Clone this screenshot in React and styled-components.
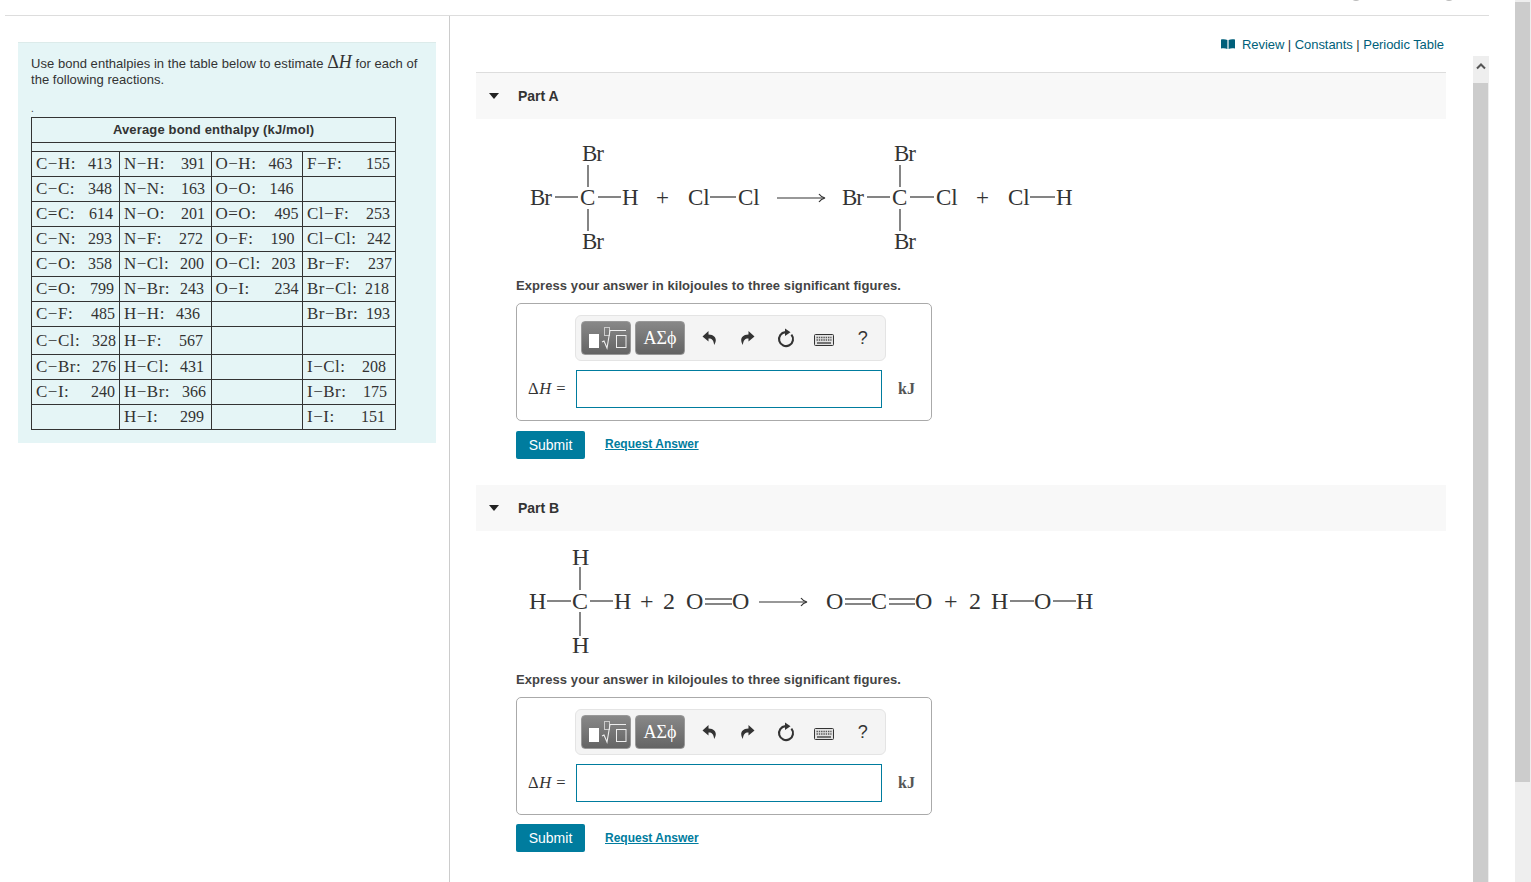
import React from "react";
import styled, { createGlobalStyle } from "styled-components";

const GlobalStyle = createGlobalStyle`
  html, body {
    margin: 0;
    padding: 0;
    background: #fff;
    overflow: hidden;
  }
  body {
    font-family: "Liberation Sans", Arial, sans-serif;
    color: #333;
  }
`;

const Page = styled.div`
  display: flex;
  width: 1531px;
  height: 882px;
  overflow: hidden;
`;

const Main = styled.div`
  width: 1484px;
  margin-left: 5px;
  display: flex;
  flex-direction: column;
`;

const TopStrip = styled.div`
  height: 16px;
  box-sizing: border-box;
  border-bottom: 1px solid #ddd;
  display: flex;
  justify-content: flex-end;
  gap: 81px;
  padding-right: 34px;
  overflow: hidden;
`;

const TopBlob = styled.span`
  width: 12px;
  height: 12px;
  margin-top: -11px;
  border-radius: 50%;
  background: #bbb;
`;

const Columns = styled.div`
  flex: 1;
  display: flex;
  min-height: 0;
`;

const LeftCol = styled.div`
  width: 445px;
  padding: 26px 0 0 13px;
  box-sizing: border-box;
  border-right: 1px solid #ccc;
`;

const InfoPanel = styled.div`
  width: 418px;
  height: 401px;
  box-sizing: border-box;
  background: #e5f5f6;
  border-top: 1px solid #dcebea;
  padding: 13px 13px 0;
  font-size: 13px;
  line-height: 16px;
`;

const InfoText = styled.p`
  margin: 0;
  width: 392px;
  letter-spacing: 0.04px;
`;

const Dot = styled.p`
  margin: 13px 0 0;
  height: 16px;
  line-height: 16px;
  font-size: 10px;
`;

const MathText = styled.span`
  font-family: "Liberation Serif", serif;
  font-size: ${(p) => p.$size || 16}px;
  line-height: 0;
`;

const Table = styled.table`
  border-collapse: collapse;
  table-layout: fixed;
  width: 364px;
  font-family: "Liberation Serif", serif;
  font-size: 16px;
  color: #333;
`;

const HeadCell = styled.th`
  border: 1px solid #333;
  height: 24px;
  padding: 0;
  font-family: "Liberation Sans", Arial, sans-serif;
  font-size: 13px;
  font-weight: 700;
  letter-spacing: 0.15px;
`;

const Spacer = styled.td`
  border: 1px solid #333;
  height: 8px;
  padding: 0;
`;

const Row = styled.tr`
  height: ${(p) => (p.$tall ? 28 : 25)}px;
`;

const Cell = styled.td`
  border: 1px solid #333;
  padding: 0 0 0 4px;
  white-space: nowrap;
  overflow: hidden;
  line-height: 20px;
`;

const BondLabel = styled.span`
  display: inline-block;
  width: ${(p) => p.$w}px;
  font-size: 17px;
  letter-spacing: 0.5px;
`;

const RightCol = styled.div`
  flex: 1;
  display: flex;
  min-width: 0;
`;

const Content = styled.div`
  width: 970px;
  margin-left: 26px;
  margin-right: 27px;
`;

const LinkBar = styled.div`
  height: 56px;
  padding: 21px 2px 0 0;
  box-sizing: border-box;
  display: flex;
  justify-content: flex-end;
  align-items: flex-start;
  font-size: 13px;
  line-height: 16px;
  letter-spacing: -0.05px;
  color: #333;
  white-space: pre;
`;

const BookIcon = styled.svg`
  width: 14px;
  height: 10px;
  margin: 2px 7px 0 0;
  color: #005f7a;
`;

const TopLink = styled.a`
  color: #005f7a;
  text-decoration: none;
  cursor: pointer;
`;

const PartHeader = styled.div`
  height: ${(p) => (p.$ruled ? 47 : 46)}px;
  box-sizing: border-box;
  display: flex;
  align-items: center;
  background: #f8f8f8;
  border-top: ${(p) => (p.$ruled ? "1px solid #ddd" : "none")};
  padding-left: 13px;
  font-size: 14px;
  font-weight: 700;
  color: #333;
`;

const Caret = styled.span`
  width: 0;
  height: 0;
  margin-right: 19px;
  border-left: 5.5px solid transparent;
  border-right: 5.5px solid transparent;
  border-top: 6px solid #222;
`;

const PartBody = styled.div`
  padding-left: 40px;
  margin-bottom: 26px;
`;

const Formula = styled.svg`
  display: block;
  margin-top: 14px;
  width: 600px;
  height: ${(p) => p.$h}px;
  text {
    font-family: "Liberation Serif", serif;
    font-size: ${(p) => p.$font}px;
    fill: #333;
  }
  line {
    stroke: #333;
    stroke-width: 1.2;
  }
  path {
    fill: none;
    stroke: #333;
    stroke-width: 1.2;
  }
`;

const Prompt = styled.p`
  margin: 0 0 9px;
  font-size: 13px;
  font-weight: 700;
  line-height: 16px;
  letter-spacing: 0.08px;
  color: #444;
`;

const AnswerBox = styled.div`
  width: 416px;
  height: 118px;
  box-sizing: border-box;
  border: 1px solid #aaa;
  border-radius: 5px;
  padding-top: 11px;
`;

const Toolbar = styled.div`
  width: 311px;
  height: 46px;
  margin-left: 58px;
  box-sizing: border-box;
  border: 1px solid #e4e4e4;
  border-radius: 6px;
  background: #f4f4f4;
  display: flex;
  align-items: center;
  padding-left: 5px;
`;

const TemplateButton = styled.button`
  width: 50px;
  height: 34px;
  margin-right: ${(p) => p.$mr || 0}px;
  padding: 0;
  border: 1px solid #999;
  border-radius: 4px;
  background: linear-gradient(#888, #646464);
  color: #fff;
  font-family: "Liberation Serif", serif;
  font-size: 18px;
  display: flex;
  align-items: center;
  justify-content: center;
`;

const ToolIcon = styled.span`
  width: 38.4px;
  height: 34px;
  box-sizing: border-box;
  padding-top: ${(p) => p.$drop || 0}px;
  display: flex;
  align-items: center;
  justify-content: center;
  color: #333;
  font-size: 18px;
  font-family: "Liberation Sans", Arial, sans-serif;
`;

const ToolIcons = styled.div`
  display: flex;
  margin-left: 5px;
`;

const AnswerRow = styled.div`
  display: flex;
  align-items: center;
  margin-top: 9px;
  padding-left: 11px;
`;

const AnswerLabel = styled.label`
  width: 48px;
  font-family: "Liberation Serif", serif;
  font-size: 16.5px;
  letter-spacing: 0.5px;
  color: #333;
  white-space: nowrap;
`;

const AnswerInput = styled.input`
  width: 306px;
  height: 38px;
  box-sizing: border-box;
  border: 1px solid #007c9e;
  background: #fff;
  padding: 0 8px;
  outline: none;
`;

const Unit = styled.span`
  margin-left: 16px;
  font-family: "Liberation Serif", serif;
  font-size: 16px;
  font-weight: 700;
  color: #555;
`;

const Actions = styled.div`
  display: flex;
  align-items: flex-start;
  margin-top: ${(p) => p.$mt}px;
`;

const Submit = styled.button`
  width: 69px;
  height: 28px;
  padding: 0;
  border: none;
  border-radius: 2px;
  background: #007c9e;
  color: #fff;
  font-family: "Liberation Sans", Arial, sans-serif;
  font-size: 14px;
`;

const RequestLink = styled.a`
  margin: ${(p) => p.$top}px 0 0 20px;
  color: #007c9e;
  font-size: 12px;
  font-weight: 700;
  line-height: 16px;
  text-decoration: underline;
  cursor: pointer;
`;

const InnerScroll = styled.div`
  width: 16px;
  margin-top: 40px;
  display: flex;
  flex-direction: column;
  background: #eee;
`;

const ScrollArrow = styled.div`
  height: 27px;
  display: flex;
  justify-content: center;
  padding-top: 6px;
  box-sizing: border-box;
  color: #555;
`;

const InnerThumb = styled.div`
  flex: 1;
  width: 15px;
  background: #ccc;
`;

const OuterScroll = styled.div`
  width: 16px;
  margin-left: 26px;
  height: 882px;
  padding-top: 2px;
  box-sizing: border-box;
  background: #eee;
`;

const OuterThumb = styled.div`
  width: 15px;
  height: 780px;
  background: #ccc;
`;

// bond data: label, value, x of the value measured from the start of the cell text
const bonds = [
  [["C−H:", 413, 52], ["N−H:", 391, 57], ["O−H:", 463, 53], ["F−F:", 155, 59]],
  [["C−C:", 348, 52], ["N−N:", 163, 57], ["O−O:", 146, 54], null],
  [["C=C:", 614, 53], ["N−O:", 201, 57], ["O=O:", 495, 59], ["Cl−F:", 253, 59]],
  [["C−N:", 293, 52], ["N−F:", 272, 55], ["O−F:", 190, 55], ["Cl−Cl:", 242, 60]],
  [["C−O:", 358, 52], ["N−Cl:", 200, 56], ["O−Cl:", 203, 56], ["Br−F:", 237, 61]],
  [["C=O:", 799, 54], ["N−Br:", 243, 56], ["O−I:", 234, 59], ["Br−Cl:", 218, 58]],
  [["C−F:", 485, 55], ["H−H:", 436, 52], null, ["Br−Br:", 193, 59]],
  [["C−Cl:", 328, 56], ["H−F:", 567, 55], null, null],
  [["C−Br:", 276, 56], ["H−Cl:", 431, 56], null, ["I−Cl:", 208, 55]],
  [["C−I:", 240, 55], ["H−Br:", 366, 58], null, ["I−Br:", 175, 56]],
  [null, ["H−I:", 299, 56], null, ["I−I:", 151, 54]],
];

const colWidths = [88, 91.5, 91.5, 93];

const Delta = () => (
  <>
    Δ<i>H</i>
  </>
);

const Br = ({ x, y }) => (
  <text x={x} y={y} letterSpacing="-1">
    Br
  </text>
);

const FormulaA = () => (
  <Formula $h={145} $font={23} viewBox="0 0 600 145">
    <Br x="66" y="28" />
    <line x1="72" y1="32" x2="72" y2="54" />
    <Br x="14" y="72" />
    <line x1="39" y1="64" x2="62" y2="64" />
    <text x="64" y="72">C</text>
    <line x1="82" y1="64" x2="105" y2="64" />
    <text x="106" y="72">H</text>
    <line x1="72" y1="76" x2="72" y2="98" />
    <Br x="66" y="116" />
    <text x="140" y="72">+</text>
    <text x="172" y="72">Cl</text>
    <line x1="194" y1="64" x2="220" y2="64" />
    <text x="222" y="72">Cl</text>
    <line x1="261" y1="65" x2="308" y2="65" />
    <path d="M303 61 Q305 64 309 65 Q305 66 303 69" />
    <Br x="378" y="28" />
    <line x1="384" y1="32" x2="384" y2="54" />
    <Br x="326" y="72" />
    <line x1="351" y1="64" x2="374" y2="64" />
    <text x="376" y="72">C</text>
    <line x1="394" y1="64" x2="418" y2="64" />
    <text x="420" y="72">Cl</text>
    <line x1="384" y1="76" x2="384" y2="98" />
    <Br x="378" y="116" />
    <text x="460" y="72">+</text>
    <text x="492" y="72">Cl</text>
    <line x1="514" y1="64" x2="539" y2="64" />
    <text x="540" y="72">H</text>
  </Formula>
);

const FormulaB = () => (
  <Formula $h={127} $font={24} viewBox="0 0 600 127">
    <text x="56" y="20">H</text>
    <line x1="64" y1="22" x2="64" y2="45" />
    <text x="13" y="64">H</text>
    <line x1="31" y1="56" x2="55" y2="56" />
    <text x="56" y="64">C</text>
    <line x1="74" y1="56" x2="97" y2="56" />
    <text x="98" y="64">H</text>
    <line x1="64" y1="67" x2="64" y2="91" />
    <text x="56" y="108">H</text>
    <text x="124" y="64">+</text>
    <text x="147" y="64">2</text>
    <text x="170" y="64">O</text>
    <line x1="189" y1="54" x2="216" y2="54" />
    <line x1="189" y1="59" x2="216" y2="59" />
    <text x="216" y="64">O</text>
    <line x1="243" y1="57" x2="290" y2="57" />
    <path d="M285 53 Q287 56 291 57 Q287 58 285 61" />
    <text x="310" y="64">O</text>
    <line x1="329" y1="54" x2="355" y2="54" />
    <line x1="329" y1="59" x2="355" y2="59" />
    <text x="355" y="64">C</text>
    <line x1="373" y1="54" x2="399" y2="54" />
    <line x1="373" y1="59" x2="399" y2="59" />
    <text x="399" y="64">O</text>
    <text x="428" y="64">+</text>
    <text x="453" y="64">2</text>
    <text x="475" y="64">H</text>
    <line x1="494" y1="56" x2="518" y2="56" />
    <text x="518" y="64">O</text>
    <line x1="537" y1="56" x2="560" y2="56" />
    <text x="560" y="64">H</text>
  </Formula>
);

const TemplateIcon = () => (
  <svg width="46" height="30" viewBox="0 0 46 30">
    <rect x="6" y="11" width="10" height="14" fill="#fff" />
    <rect x="21.5" y="4.5" width="5" height="8" fill="none" stroke="#ccc" />
    <path d="M19 19 L21 18 L24 25 L27 7.5 L43 7.5" fill="none" stroke="#eee" strokeWidth="1.1" />
    <rect x="33.5" y="12.5" width="9.5" height="12" fill="none" stroke="#eee" />
  </svg>
);

const UndoIcon = ({ flip }) => (
  <svg width="15" height="16" viewBox="0 0 15 16" style={flip ? { transform: "scaleX(-1)" } : undefined}>
    <path
      d="M6.5 1 L0.5 6.4 L6.5 11.6 L6.5 8.4 C9.6 8.2 11.6 9.8 12.2 15 C14.6 11.4 15.4 4.8 6.5 4.4 Z"
      fill="#333"
    />
  </svg>
);

const ResetIcon = () => (
  <svg width="18" height="20" viewBox="0 0 18 20">
    <path d="M8.5 4.1 A7 7 0 1 0 14.4 6.6" fill="none" stroke="#333" strokeWidth="2.1" />
    <path d="M8 0.5 L8 8 L13.5 4.2 Z" fill="#333" />
  </svg>
);

const KeyboardIcon = () => (
  <svg width="20" height="14" viewBox="0 0 20 14">
    <rect x="0.5" y="1.5" width="19" height="11" rx="1" fill="#e2e2e2" stroke="#333" />
    <path d="M2.5 4.5 H17.5 M2.5 7 H17.5" stroke="#555" strokeWidth="1.4" strokeDasharray="1.4 0.9" />
    <path d="M3 10 H17" stroke="#444" strokeWidth="1.4" />
  </svg>
);

const AnswerArea = ({ actionsGap, linkTop }) => (
  <>
    <Prompt>Express your answer in kilojoules to three significant figures.</Prompt>
    <AnswerBox>
      <Toolbar>
        <TemplateButton $mr={4} aria-label="templates">
          <TemplateIcon />
        </TemplateButton>
        <TemplateButton>ΑΣϕ</TemplateButton>
        <ToolIcons>
          <ToolIcon><UndoIcon /></ToolIcon>
          <ToolIcon><UndoIcon flip /></ToolIcon>
          <ToolIcon><ResetIcon /></ToolIcon>
          <ToolIcon $drop={4}><KeyboardIcon /></ToolIcon>
          <ToolIcon>?</ToolIcon>
        </ToolIcons>
      </Toolbar>
      <AnswerRow>
        <AnswerLabel>
          <Delta /> =
        </AnswerLabel>
        <AnswerInput type="text" />
        <Unit>kJ</Unit>
      </AnswerRow>
    </AnswerBox>
    <Actions $mt={actionsGap}>
      <Submit>Submit</Submit>
      <RequestLink $top={linkTop}>Request Answer</RequestLink>
    </Actions>
  </>
);

export default function App() {
  return (
    <>
      <GlobalStyle />
      <Page>
        <Main>
          <TopStrip>
            <TopBlob />
            <TopBlob />
          </TopStrip>
          <Columns>
            <LeftCol>
              <InfoPanel>
                <InfoText>
                  Use bond enthalpies in the table below to estimate{" "}
                  <MathText $size={18}>
                    <Delta />
                  </MathText>{" "}
                  for each of the following reactions.
                </InfoText>
                <Dot>.</Dot>
                <Table>
                  <colgroup>
                    {colWidths.map((w, i) => (
                      <col key={i} width={w} />
                    ))}
                  </colgroup>
                  <thead>
                    <tr>
                      <HeadCell colSpan={4}>Average bond enthalpy (kJ/mol)</HeadCell>
                    </tr>
                    <tr>
                      <Spacer colSpan={4} />
                    </tr>
                  </thead>
                  <tbody>
                    {bonds.map((row, i) => (
                      <Row key={i} $tall={i === 7}>
                        {row.map((bond, j) => (
                          <Cell key={j}>
                            {bond && (
                              <>
                                <BondLabel $w={bond[2]}>{bond[0]}</BondLabel>
                                {bond[1]}
                              </>
                            )}
                          </Cell>
                        ))}
                      </Row>
                    ))}
                  </tbody>
                </Table>
              </InfoPanel>
            </LeftCol>
            <RightCol>
              <Content>
                <LinkBar>
                  <BookIcon viewBox="0 0 14 10">
                    <path d="M0 0.5 C2 0 4.5 0 6.4 1 V10 C4.5 9 2 9 0 9.5 Z M14 0.5 C12 0 9.5 0 7.6 1 V10 C9.5 9 12 9 14 9.5 Z" fill="currentColor" />
                  </BookIcon>
                  <TopLink>Review</TopLink> | <TopLink>Constants</TopLink> | <TopLink>Periodic Table</TopLink>
                </LinkBar>
                <PartHeader $ruled>
                  <Caret />
                  Part A
                </PartHeader>
                <PartBody>
                  <FormulaA />
                  <AnswerArea actionsGap={10} linkTop={5} />
                </PartBody>
                <PartHeader>
                  <Caret />
                  Part B
                </PartHeader>
                <PartBody>
                  <FormulaB />
                  <AnswerArea actionsGap={9} linkTop={6} />
                </PartBody>
              </Content>
              <InnerScroll>
                <ScrollArrow>
                  <svg width="10" height="8" viewBox="0 0 10 8">
                    <path d="M1 6.5 L5 2.5 L9 6.5" fill="none" stroke="currentColor" strokeWidth="2" />
                  </svg>
                </ScrollArrow>
                <InnerThumb />
              </InnerScroll>
            </RightCol>
          </Columns>
        </Main>
        <OuterScroll>
          <OuterThumb />
        </OuterScroll>
      </Page>
    </>
  );
}
